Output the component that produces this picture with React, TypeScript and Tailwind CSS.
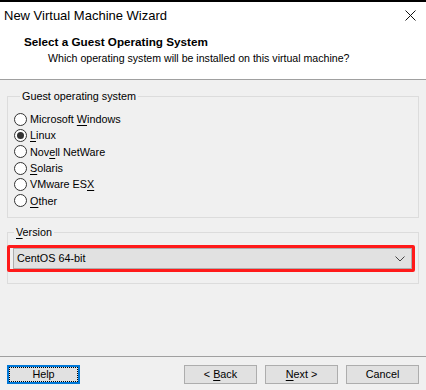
import React from 'react';

const font = { fontFamily: '"Liberation Sans", Arial, sans-serif' };

function Accel({ text, at }: { text: string; at: number }) {
  if (at < 0) return <span>{text}</span>;
  return (
    <span className="whitespace-pre">
      {text.slice(0, at)}
      <span className="underline underline-offset-2">{text[at]}</span>
      {text.slice(at + 1)}
    </span>
  );
}

function Radio({ label, at, checked }: { label: string; at: number; checked?: boolean }) {
  return (
    <div className="flex h-[16.3px] items-center">
      <span className="flex h-[13px] w-[13px] items-center justify-center rounded-full border border-[#333] bg-white">
        {checked && <span className="h-[7px] w-[7px] rounded-full bg-[#333]" />}
      </span>
      <span className="ml-[3px] text-[10.8px] text-black">
        <Accel text={label} at={at} />
      </span>
    </div>
  );
}

function Btn({ label, at, focused }: { label: string; at: number; focused?: boolean }) {
  return (
    <button
      className={`flex h-[19px] w-[73px] items-center justify-center bg-[#e1e1e1] text-[10.8px] text-black ${
        focused ? 'border-2 border-[#0078d7]' : 'border border-[#adadad]'
      }`}
    >
      <span
        className={`flex h-full w-full items-center justify-center ${
          focused ? 'border border-dotted border-black' : ''
        }`}
      >
        <Accel text={label} at={at} />
      </span>
    </button>
  );
}

export default function App() {
  const options: [string, number, boolean][] = [
    ['Microsoft Windows', 10, false],
    ['Linux', 0, true],
    ['Novell NetWare', 3, false],
    ['Solaris', 0, false],
    ['VMware ESX', 9, false],
    ['Other', 0, false],
  ];

  return (
    <div className="flex h-[390px] w-[426px] flex-col overflow-hidden bg-[#f0f0f0]" style={font}>
      <div className="border-t-2 border-black bg-white">
        <div className="flex h-[27px] items-center justify-between pl-[4px] pr-[10px]">
          <span className="text-[13px] text-black">New Virtual Machine Wizard</span>
          <svg width="11" height="11" viewBox="0 0 11 11">
            <path d="M0.5 0.5 L10.5 10.5 M10.5 0.5 L0.5 10.5" stroke="#111" strokeWidth="1" />
          </svg>
        </div>
        <div className="h-[50px] pl-[24px] pt-[5px]">
          <div className="text-[11.7px] font-bold leading-[16px] text-black">Select a Guest Operating System</div>
          <div className="pl-[24px] text-[10.6px] leading-[16px] text-black">
            Which operating system will be installed on this virtual machine?
          </div>
        </div>
        <div className="h-px bg-[#a0a0a0]" />
      </div>

      <div className="flex flex-1 flex-col px-[7px] pt-[9px]">
        <fieldset className="h-[129px] border border-[#dcdcdc] pl-[6px] pr-[4px]">
          <legend className="ml-[6px] px-[2px] text-[10.8px] leading-[14px] text-black">Guest operating system</legend>
          <div className="mt-[8px] flex flex-col">
            {options.map(([l, a, c]) => (
              <Radio key={l} label={l} at={a} checked={c} />
            ))}
          </div>
        </fieldset>

        <fieldset className="mt-[7px] h-[59px] border border-[#dcdcdc]">
          <legend className="ml-[6px] px-[2px] text-[10.8px] leading-[14px] text-black">
            <Accel text="Version" at={0} />
          </legend>
          <div className="-ml-px mt-[6px] mr-[3px] rounded-[2px] border-[3px] border-[#ff1a1a] pl-[3px]">
            <div className="flex h-[21px] items-center justify-between border border-[#adadad] bg-[#e1e1e1] pl-[3px] pr-[6px]">
              <span className="text-[10.8px] text-black">CentOS 64-bit</span>
              <svg width="10" height="6" viewBox="0 0 10 6">
                <path d="M0.5 0.5 L5 5 L9.5 0.5" stroke="#444" strokeWidth="1" fill="none" />
              </svg>
            </div>
          </div>
        </fieldset>

        <div className="flex-1" />
      </div>

      <div className="h-px bg-[#a0a0a0]" />
      <div className="flex h-[33px] items-start px-[7px] pt-[8px]">
        <Btn label="Help" at={-1} focused />
        <div className="flex-1" />
        <div className="flex gap-[8px]">
          <Btn label="< Back" at={2} />
          <Btn label="Next >" at={0} />
          <Btn label="Cancel" at={-1} />
        </div>
      </div>
    </div>
  );
}
